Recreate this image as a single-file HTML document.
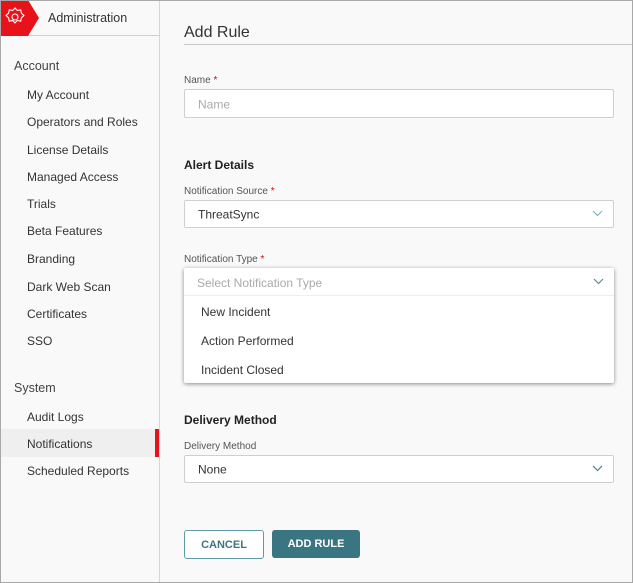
<!DOCTYPE html>
<html><head><style>
*{margin:0;padding:0;box-sizing:border-box}
body{width:633px;height:583px;overflow:hidden;font-family:"Liberation Sans",sans-serif;background:#f9f9f9;position:relative;color:#333}
.frame{position:absolute;inset:0;border:1px solid #a8a8a8;pointer-events:none;z-index:9}
.side{position:absolute;left:0;top:0;width:160px;height:583px;border-right:1px solid #d6d6d6;background:#f9f9f9}
.hdr{position:absolute;left:0;top:0;width:159px;height:36px;border-bottom:1px solid #cfcfcf}
.t{position:absolute;white-space:nowrap;font-size:12px;color:#333;margin-top:1px}
.grp{font-size:12.5px;color:#444}
.lab{font-size:10px;color:#555}
.req{color:#d00}
.inp{position:absolute;left:184px;width:430px;background:#fff;border:1px solid #cfcfcf;border-radius:2px}
.inp span{position:absolute;left:13px;top:50%;transform:translateY(-45%);font-size:12px}
.chev{position:absolute;right:10px;top:50%;margin-top:-4px}
.h{font-weight:bold;font-size:12px;color:#222}
</style></head><body>
<div class="side">
<div class="hdr">
<svg style="position:absolute;left:0;top:0" width="40" height="36"><polygon points="0,0 28,0 39,18 28,36 0,36" fill="#e8121b"/>
<g fill="none" stroke="#fff" stroke-width="1.1"><circle cx="15" cy="17" r="3"/><path d="M15 8l2.3 2.5 3.4-.7.7 3.4 2.5 2.3-2.5 2.3-.7 3.4-3.4-.7-2.3 2.5-2.3-2.5-3.4.7-.7-3.4-2.5-2.3 2.5-2.3.7-3.4 3.4.7z"/></g></svg>
<div class="t" style="left:48px;top:10px;font-size:12.5px">Administration</div>
</div>
<div class="t grp" style="left:14px;top:58px">Account</div>
<div class="t" style="left:27px;top:87px">My Account</div>
<div class="t" style="left:27px;top:114px">Operators and Roles</div>
<div class="t" style="left:27px;top:142px">License Details</div>
<div class="t" style="left:27px;top:169px">Managed Access</div>
<div class="t" style="left:27px;top:196px">Trials</div>
<div class="t" style="left:27px;top:223px">Beta Features</div>
<div class="t" style="left:27px;top:251px">Branding</div>
<div class="t" style="left:27px;top:279px">Dark Web Scan</div>
<div class="t" style="left:27px;top:306px">Certificates</div>
<div class="t" style="left:27px;top:333px">SSO</div>
<div class="t grp" style="left:14px;top:380px">System</div>
<div class="t" style="left:27px;top:409px">Audit Logs</div>
<div style="position:absolute;left:0;top:429px;width:159px;height:28px;background:#efefef"></div>
<div style="position:absolute;left:155px;top:429px;width:4px;height:28px;background:#e8121b"></div>
<div class="t" style="left:27px;top:436px">Notifications</div>
<div class="t" style="left:27px;top:463px">Scheduled Reports</div>
</div>

<div class="t" style="left:184px;top:23px;font-size:16px;color:#333">Add Rule</div>
<div style="position:absolute;left:184px;top:44px;width:449px;height:1px;background:#c8c8c8"></div>

<div class="t lab" style="left:184px;top:74px">Name <span class="req">*</span></div>
<div class="inp" style="top:89px;height:29px"><span style="color:#aaa">Name</span></div>

<div class="t h" style="left:184px;top:157px">Alert Details</div>
<div class="t lab" style="left:184px;top:185px">Notification Source <span class="req">*</span></div>
<div class="inp" style="top:200px;height:28px"><span style="color:#333">ThreatSync</span>
<svg class="chev" width="11" height="7"><path d="M1 1l4.5 4.5L10 1" fill="none" stroke="#7ab5bf" stroke-width="1.2"/></svg></div>

<div class="t lab" style="left:184px;top:253px">Notification Type <span class="req">*</span></div>
<div style="position:absolute;left:184px;top:268px;width:430px;height:115px;background:#fff;box-shadow:0 1px 4px rgba(0,0,0,.45);border-radius:2px"></div>
<div style="position:absolute;left:184px;top:268px;width:430px;height:28px;border-bottom:1px solid #eee">
<span class="t" style="left:13px;top:7px;color:#aaa">Select Notification Type</span>
<svg class="chev" width="11" height="7"><path d="M1 1l4.5 4.5L10 1" fill="none" stroke="#5a8f9a" stroke-width="1.2"/></svg></div>
<div class="t" style="left:201px;top:304px">New Incident</div>
<div class="t" style="left:201px;top:333px">Action Performed</div>
<div class="t" style="left:201px;top:362px">Incident Closed</div>

<div class="t h" style="left:184px;top:412px">Delivery Method</div>
<div class="t lab" style="left:184px;top:440px">Delivery Method</div>
<div class="inp" style="top:455px;height:28px"><span style="color:#333">None</span>
<svg class="chev" width="11" height="7"><path d="M1 1l4.5 4.5L10 1" fill="none" stroke="#4a7f8a" stroke-width="1.2"/></svg></div>

<div style="position:absolute;left:184px;top:530px;width:80px;height:29px;border:1px solid #5f9ba4;border-radius:3px;background:#fff;color:#3d7580;font-weight:bold;font-size:11px;text-align:center;line-height:29px">CANCEL</div>
<div style="position:absolute;left:272px;top:530px;width:88px;height:28px;border-radius:3px;background:#3a7681;color:#fff;font-weight:bold;font-size:11px;text-align:center;line-height:28px">ADD RULE</div>
<div class="frame"></div>
</body></html>
